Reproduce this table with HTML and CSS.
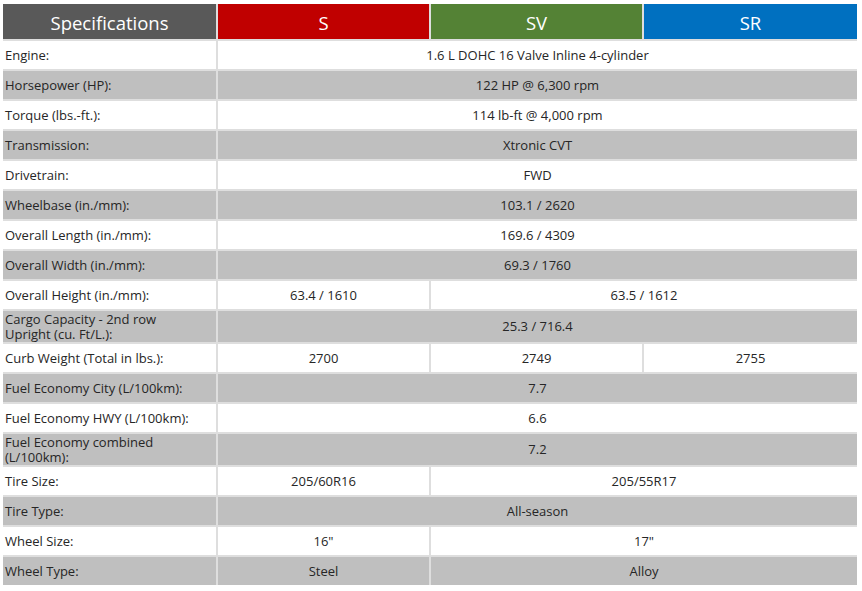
FILE: index.html
```html
<!DOCTYPE html>
<html>
<head>
<meta charset="utf-8">
<link rel="stylesheet" href="styles.css">
</head>
<body>
<div class="specs">
  <div class="hd hd-spec">Specifications</div>
  <div class="hd hd-s">S</div>
  <div class="hd hd-sv">SV</div>
  <div class="hd hd-sr">SR</div>

  <div class="lb">Engine:</div><div class="v span3">1.6 L DOHC 16 Valve Inline 4-cylinder</div>
  <div class="lb g">Horsepower (HP):</div><div class="v g span3">122 HP @ 6,300 rpm</div>
  <div class="lb">Torque (lbs.-ft.):</div><div class="v span3">114 lb-ft @ 4,000 rpm</div>
  <div class="lb g">Transmission:</div><div class="v g span3">Xtronic CVT</div>
  <div class="lb">Drivetrain:</div><div class="v span3">FWD</div>
  <div class="lb g">Wheelbase (in./mm):</div><div class="v g span3">103.1 / 2620</div>
  <div class="lb">Overall Length (in./mm):</div><div class="v span3">169.6 / 4309</div>
  <div class="lb g">Overall Width (in./mm):</div><div class="v g span3">69.3 / 1760</div>
  <div class="lb">Overall Height (in./mm):</div><div class="v">63.4 / 1610</div><div class="v span2">63.5 / 1612</div>
  <div class="lb g two"><span>Cargo Capacity - 2nd row<br>Upright (cu. Ft/L.):</span></div><div class="v g span3">25.3 / 716.4</div>
  <div class="lb">Curb Weight (Total in lbs.):</div><div class="v">2700</div><div class="v">2749</div><div class="v">2755</div>
  <div class="lb g">Fuel Economy City (L/100km):</div><div class="v g span3">7.7</div>
  <div class="lb">Fuel Economy HWY (L/100km):</div><div class="v span3">6.6</div>
  <div class="lb g two"><span>Fuel Economy combined<br>(L/100km):</span></div><div class="v g span3">7.2</div>
  <div class="lb">Tire Size:</div><div class="v">205/60R16</div><div class="v span2">205/55R17</div>
  <div class="lb g">Tire Type:</div><div class="v g span3">All-season</div>
  <div class="lb">Wheel Size:</div><div class="v">16"</div><div class="v span2">17"</div>
  <div class="lb g">Wheel Type:</div><div class="v g">Steel</div><div class="v g span2">Alloy</div>
</div>
</body>
</html>
```
FILE: styles.css
```css
html, body {
  margin: 0;
  padding: 0;
  background: #ffffff;
}
body {
  padding: 4px 0 0 3px;
  font-family: "Open Sans", "Liberation Sans", sans-serif;
  color: #262626;
}
.specs {
  display: grid;
  grid-template-columns: 213px 211px 211px 213px;
  grid-auto-rows: minmax(28px, auto);
  gap: 2px;
  width: 854px;
  background: #dedede;
}
.specs > div {
  display: flex;
  align-items: center;
  background: #ffffff;
  font-size: 13px;
  line-height: 15px;
}
.hd {
  height: 35px;
  justify-content: center;
  color: #ffffff;
  font-size: 18.5px !important;
  padding-top: 1px;
  box-sizing: border-box;
}
.hd-spec { background: #595959 !important; }
.hd-s { background: #c00000 !important; }
.hd-sv { background: #548235 !important; }
.hd-sr { background: #0070c0 !important; }
.lb {
  padding: 0 4px 0 2px;
}
.two {
  min-height: 31px;
}
.v {
  justify-content: center;
  text-align: center;
}
.specs > .g { background: #bfbfbf; }
.span3 { grid-column: span 3; }
.span2 { grid-column: span 2; }
```
